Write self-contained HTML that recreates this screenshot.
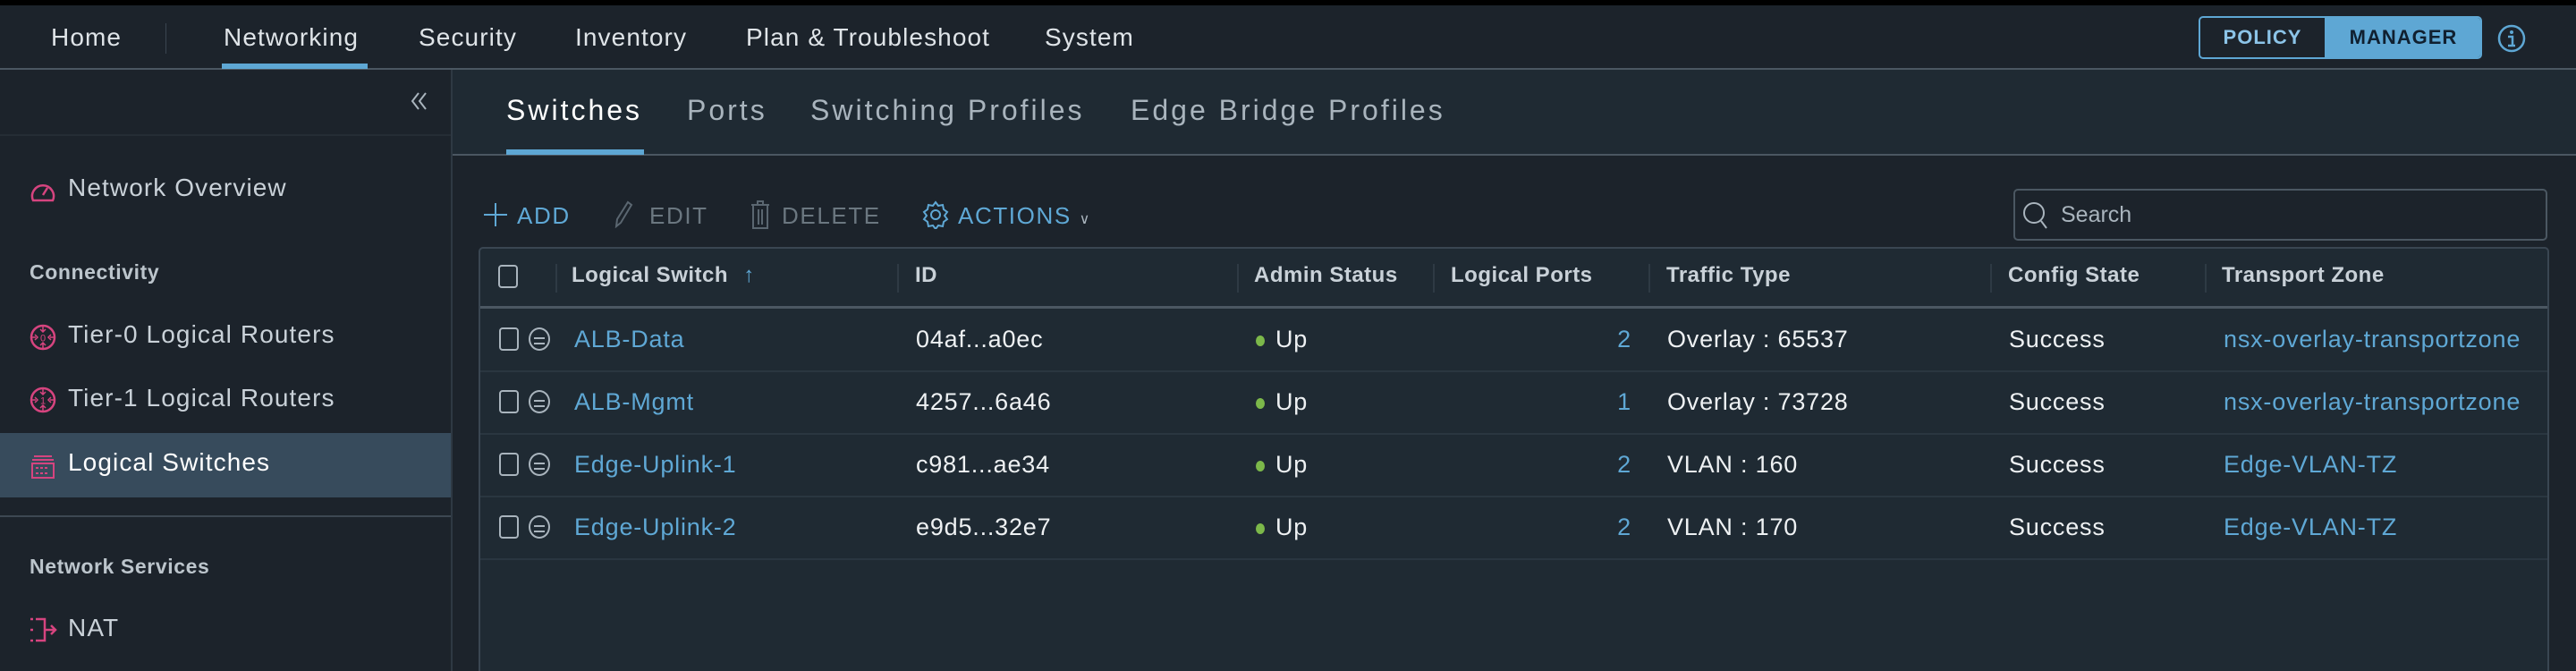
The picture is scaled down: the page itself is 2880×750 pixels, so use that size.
<!DOCTYPE html>
<html style="overflow:hidden;height:750px"><head><meta charset="utf-8"><style>
*{margin:0;padding:0;box-sizing:border-box}
body{width:2880px;height:750px;overflow:hidden;background:#1c232b;font-family:"Liberation Sans",sans-serif;color:#e6eaee;position:relative}
.a{position:absolute;white-space:nowrap}
.nav{font-size:28px;color:#dfe4e8;top:26px;letter-spacing:1.1px}
.side{font-size:28px;color:#c9d1d8;letter-spacing:1.1px}
.sec{font-size:23px;font-weight:bold;color:#bcc5cc;letter-spacing:0.6px}
.tab{font-size:32px;color:#a9b4bd;top:105px;letter-spacing:3px}
.tb{font-size:26px;letter-spacing:1.6px;top:226px}
.th{font-size:24px;font-weight:bold;color:#c9d1d8;top:294px;letter-spacing:0.5px}
.td{font-size:27px;color:#eef1f3;letter-spacing:0.8px}
.lk{color:#5fa8d5}
.sep{position:absolute;width:2px;height:32px;background:#2e3a44;top:295px}
.cb{position:absolute;width:22px;height:26px;border:2px solid #a9b4bd;border-radius:4px}
.ex{position:absolute;width:24px;height:26px;border:2px solid #a9b4bd;border-radius:50%}
.ex:after{content:"";position:absolute;left:4px;right:4px;top:9px;height:4px;border-top:2px solid #a9b4bd;border-bottom:2px solid #a9b4bd}
.dot{display:inline-block;width:10px;height:12px;border-radius:50%;background:#7cb84a;margin-right:12px;vertical-align:1px}
</style></head><body>
<div class="a" style="left:0;top:0;width:2880px;height:6px;background:#000"></div>
<div class="a" style="left:0;top:76px;width:2880px;height:2px;background:#4b5762"></div>
<div class="a nav" style="left:57px">Home</div>
<div class="a" style="left:185px;top:26px;width:1px;height:34px;background:#3a4550"></div>
<div class="a nav" style="left:250px">Networking</div>
<div class="a" style="left:248px;top:71px;width:163px;height:6px;background:#5ea7d4"></div>
<div class="a nav" style="left:468px">Security</div>
<div class="a nav" style="left:643px">Inventory</div>
<div class="a nav" style="left:834px">Plan &amp; Troubleshoot</div>
<div class="a nav" style="left:1168px">System</div>
<div class="a" style="left:2458px;top:18px;width:317px;height:48px;border:2px solid #5ea7d4;border-radius:5px;overflow:hidden">
<div class="a" style="left:0;top:0;width:139px;height:44px;font-size:22px;font-weight:bold;color:#8cc4e8;text-align:center;line-height:44px;letter-spacing:1px">POLICY</div>
<div class="a" style="left:139px;top:0;width:176px;height:44px;background:#5ea7d4;font-size:22px;font-weight:bold;color:#102030;text-align:center;line-height:44px;letter-spacing:1px">MANAGER</div></div>
<svg class="a" style="left:2792px;top:27px" width="32" height="32" viewBox="0 0 32 32"><circle cx="16" cy="16" r="14" fill="none" stroke="#5ea7d4" stroke-width="2.5"/><circle cx="16" cy="9" r="2" fill="#5ea7d4"/><path d="M12 14h5v10M12 24h8" stroke="#5ea7d4" stroke-width="2.5" fill="none"/></svg>
<!-- sidebar -->
<div class="a" style="left:0;top:78px;width:504px;height:672px;background:#1c232b"></div>
<div class="a" style="left:504px;top:78px;width:2px;height:672px;background:#2e3943"></div>
<div class="a" style="left:0;top:150px;width:504px;height:2px;background:#252d35"></div>
<svg class="a" style="left:457px;top:101px" width="24" height="24" viewBox="0 0 24 24"><path d="M11 3l-7 9 7 9M19 3l-7 9 7 9" stroke="#a9b4bd" stroke-width="2" fill="none"/></svg>
<svg class="a" style="left:33px;top:198px" width="30" height="30" viewBox="0 0 30 30"><path d="M4 26A12 12 0 1 1 26 26Z" fill="none" stroke="#d6447f" stroke-width="2.5"/><path d="M15 20l5-8" stroke="#d6447f" stroke-width="2.5"/></svg>
<div class="a side" style="left:76px;top:194px">Network Overview</div>
<div class="a sec" style="left:33px;top:291px">Connectivity</div>
<svg class="a" style="left:33px;top:362px" width="30" height="30" viewBox="0 0 30 30"><circle cx="15" cy="15" r="13" fill="none" stroke="#d6447f" stroke-width="2.5"/><path d="M15 3v5M12 6l3 3 3-3M15 27v-5M12 24l3-3 3 3M3 15h4M6 12l3 3-3 3M27 15h-4M24 12l-3 3 3 3" fill="none" stroke="#d6447f" stroke-width="1.5"/><text x="15" y="19.5" font-size="11" fill="#d6447f" text-anchor="middle" font-family="Liberation Sans">0</text></svg>
<div class="a side" style="left:76px;top:358px">Tier-0 Logical Routers</div>
<svg class="a" style="left:33px;top:432px" width="30" height="30" viewBox="0 0 30 30"><circle cx="15" cy="15" r="13" fill="none" stroke="#d6447f" stroke-width="2.5"/><path d="M15 3v5M12 6l3 3 3-3M15 27v-5M12 24l3-3 3 3M3 15h4M6 12l3 3-3 3M27 15h-4M24 12l-3 3 3 3" fill="none" stroke="#d6447f" stroke-width="1.5"/><text x="15" y="19.5" font-size="11" fill="#d6447f" text-anchor="middle" font-family="Liberation Sans">1</text></svg>
<div class="a side" style="left:76px;top:429px">Tier-1 Logical Routers</div>
<div class="a" style="left:0;top:484px;width:504px;height:72px;background:#374b5c"></div>
<svg class="a" style="left:34px;top:508px" width="28" height="28" viewBox="0 0 28 28"><path d="M4 2h20M2 6h24M2 10h24v16H2z" fill="none" stroke="#d6447f" stroke-width="2"/><path d="M6 15h14M6 21h14" stroke="#d6447f" stroke-width="2" stroke-dasharray="3 2"/></svg>
<div class="a side" style="left:76px;top:501px;color:#fff">Logical Switches</div>
<div class="a" style="left:0;top:576px;width:504px;height:2px;background:#3d4852"></div>
<div class="a sec" style="left:33px;top:620px">Network Services</div>
<svg class="a" style="left:32px;top:690px" width="32" height="28" viewBox="0 0 32 28"><path d="M8 2h10v24H8M18 14h12M25 9l5 5-5 5M2 2h3M2 14h3M2 26h3" fill="none" stroke="#d6447f" stroke-width="2.5"/></svg>
<div class="a side" style="left:76px;top:686px">NAT</div>
<!-- tabs -->
<div class="a" style="left:506px;top:78px;width:2374px;height:95px;background:#1f2a33"></div>
<div class="a" style="left:506px;top:172px;width:2374px;height:2px;background:#4b5762"></div>
<div class="a tab" style="left:566px;color:#fff">Switches</div>
<div class="a" style="left:566px;top:167px;width:154px;height:6px;background:#5ea7d4"></div>
<div class="a tab" style="left:768px">Ports</div>
<div class="a tab" style="left:906px">Switching Profiles</div>
<div class="a tab" style="left:1264px">Edge Bridge Profiles</div>
<!-- toolbar -->
<svg class="a" style="left:540px;top:226px" width="28" height="28" viewBox="0 0 28 28"><path d="M14 1v26M1 14h26" stroke="#5fa8d5" stroke-width="2"/></svg>
<div class="a tb lk" style="left:578px">ADD</div>
<svg class="a" style="left:686px;top:223px" width="22" height="32" viewBox="0 0 22 32"><path d="M4 22L16 3l4 3L8 26l-5 4z" fill="none" stroke="#5a6670" stroke-width="2"/></svg>
<div class="a tb" style="left:726px;color:#6b7780">EDIT</div>
<svg class="a" style="left:838px;top:223px" width="24" height="34" viewBox="0 0 24 34"><path d="M2 6h20M9 6V2h6v4M4 6v26h16V6M10 11v17M14 11v17" fill="none" stroke="#5a6670" stroke-width="2"/></svg>
<div class="a tb" style="left:874px;color:#6b7780">DELETE</div>
<svg class="a" style="left:1030px;top:224px" width="32" height="32" viewBox="0 0 32 32"><circle cx="16" cy="16" r="5" fill="none" stroke="#5fa8d5" stroke-width="2"/><path d="M16 2l3 4 5-1 1 5 4 3-3 4 3 4-4 3-1 5-5-1-3 4-3-4-5 1-1-5-4-3 3-4-3-4 4-3 1-5 5 1z" fill="none" stroke="#5fa8d5" stroke-width="2"/></svg>
<div class="a tb lk" style="left:1071px">ACTIONS <span style="font-size:16px;color:#a9b4bd">&#8744;</span></div>
<div class="a" style="left:2251px;top:211px;width:597px;height:58px;border:2px solid #4b5762;border-radius:5px"></div>
<svg class="a" style="left:2260px;top:224px" width="34" height="36" viewBox="0 0 34 36"><circle cx="14" cy="14" r="11" fill="none" stroke="#a9b4bd" stroke-width="2"/><path d="M22 23l6 8" stroke="#a9b4bd" stroke-width="2"/></svg>
<div class="a" style="left:2304px;top:226px;font-size:25px;color:#a9b4bd">Search</div>
<!-- table -->
<div class="a" style="left:535px;top:276px;width:2315px;height:474px;background:#1f2a33;border:2px solid #3a4652;border-bottom:none;border-radius:5px 5px 0 0"></div>
<div class="a" style="left:537px;top:342px;width:2311px;height:3px;background:#4b5762"></div>
<div class="a" style="left:537px;top:414px;width:2311px;height:2px;background:#2a3640"></div>
<div class="a" style="left:537px;top:484px;width:2311px;height:2px;background:#2a3640"></div>
<div class="a" style="left:537px;top:554px;width:2311px;height:2px;background:#2a3640"></div>
<div class="a" style="left:537px;top:624px;width:2311px;height:2px;background:#2a3640"></div>
<div class="cb" style="left:557px;top:296px"></div>
<div class="sep" style="left:621px"></div><div class="sep" style="left:1003px"></div><div class="sep" style="left:1383px"></div><div class="sep" style="left:1602px"></div><div class="sep" style="left:1843px"></div><div class="sep" style="left:2225px"></div><div class="sep" style="left:2465px"></div>
<div class="a th" style="left:639px">Logical Switch <span style="color:#5fa8d5;font-weight:normal;margin-left:10px">&#8593;</span></div>
<div class="a th" style="left:1023px">ID</div>
<div class="a th" style="left:1402px">Admin Status</div>
<div class="a th" style="left:1622px">Logical Ports</div>
<div class="a th" style="left:1863px">Traffic Type</div>
<div class="a th" style="left:2245px">Config State</div>
<div class="a th" style="left:2484px">Transport Zone</div>

<div class="cb" style="left:558px;top:366px"></div><div class="ex" style="left:591px;top:366px"></div>
<div class="a td lk" style="left:642px;top:364px">ALB-Data</div><div class="a td" style="left:1024px;top:364px">04af...a0ec</div><div class="a td" style="left:1404px;top:364px"><span class="dot"></span>Up</div><div class="a td lk" style="left:1780px;top:364px;width:44px;text-align:right">2</div><div class="a td" style="left:1864px;top:364px">Overlay : 65537</div><div class="a td" style="left:2246px;top:364px">Success</div><div class="a td lk" style="left:2486px;top:364px">nsx-overlay-transportzone</div>

<div class="cb" style="left:558px;top:436px"></div><div class="ex" style="left:591px;top:436px"></div>
<div class="a td lk" style="left:642px;top:434px">ALB-Mgmt</div><div class="a td" style="left:1024px;top:434px">4257...6a46</div><div class="a td" style="left:1404px;top:434px"><span class="dot"></span>Up</div><div class="a td lk" style="left:1780px;top:434px;width:44px;text-align:right">1</div><div class="a td" style="left:1864px;top:434px">Overlay : 73728</div><div class="a td" style="left:2246px;top:434px">Success</div><div class="a td lk" style="left:2486px;top:434px">nsx-overlay-transportzone</div>

<div class="cb" style="left:558px;top:506px"></div><div class="ex" style="left:591px;top:506px"></div>
<div class="a td lk" style="left:642px;top:504px">Edge-Uplink-1</div><div class="a td" style="left:1024px;top:504px">c981...ae34</div><div class="a td" style="left:1404px;top:504px"><span class="dot"></span>Up</div><div class="a td lk" style="left:1780px;top:504px;width:44px;text-align:right">2</div><div class="a td" style="left:1864px;top:504px">VLAN : 160</div><div class="a td" style="left:2246px;top:504px">Success</div><div class="a td lk" style="left:2486px;top:504px">Edge-VLAN-TZ</div>

<div class="cb" style="left:558px;top:576px"></div><div class="ex" style="left:591px;top:576px"></div>
<div class="a td lk" style="left:642px;top:574px">Edge-Uplink-2</div><div class="a td" style="left:1024px;top:574px">e9d5...32e7</div><div class="a td" style="left:1404px;top:574px"><span class="dot"></span>Up</div><div class="a td lk" style="left:1780px;top:574px;width:44px;text-align:right">2</div><div class="a td" style="left:1864px;top:574px">VLAN : 170</div><div class="a td" style="left:2246px;top:574px">Success</div><div class="a td lk" style="left:2486px;top:574px">Edge-VLAN-TZ</div>
</body></html>
